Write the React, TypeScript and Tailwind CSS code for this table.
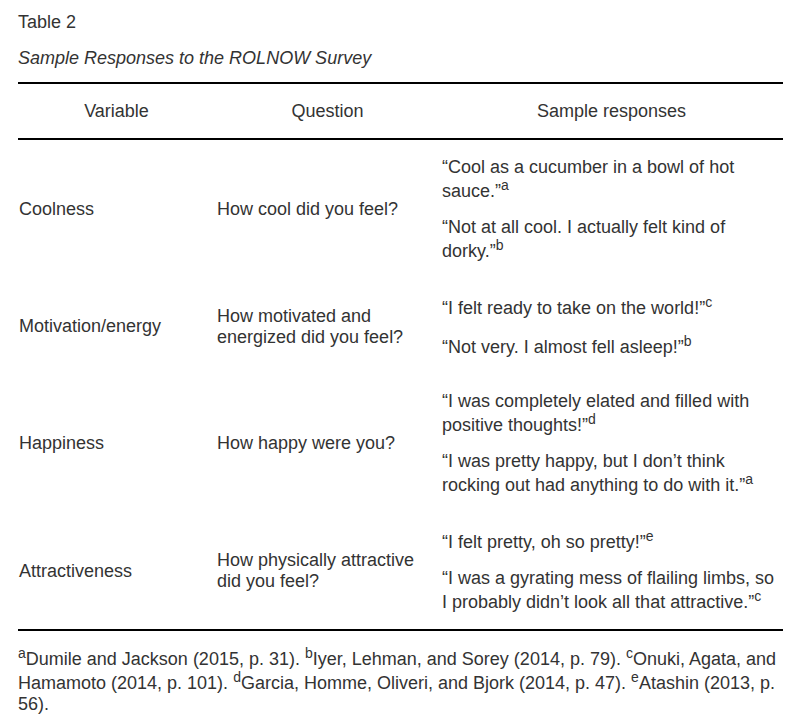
import React from 'react';

type Resp = { text: string; note: string };
type Row = { variable: string; question: string; responses: Resp[] };

const rows: Row[] = [
  {
    variable: 'Coolness',
    question: 'How cool did you feel?',
    responses: [
      { text: '“Cool as a cucumber in a bowl of hot sauce.”', note: 'a' },
      { text: '“Not at all cool. I actually felt kind of dorky.”', note: 'b' },
    ],
  },
  {
    variable: 'Motivation/energy',
    question: 'How motivated and energized did you feel?',
    responses: [
      { text: '“I felt ready to take on the world!”', note: 'c' },
      { text: '“Not very. I almost fell asleep!”', note: 'b' },
    ],
  },
  {
    variable: 'Happiness',
    question: 'How happy were you?',
    responses: [
      { text: '“I was completely elated and filled with positive thoughts!”', note: 'd' },
      { text: '“I was pretty happy, but I don’t think rocking out had anything to do with it.”', note: 'a' },
    ],
  },
  {
    variable: 'Attractiveness',
    question: 'How physically attractive did you feel?',
    responses: [
      { text: '“I felt pretty, oh so pretty!”', note: 'e' },
      { text: '“I was a gyrating mess of flailing limbs, so I probably didn’t look all that attractive.”', note: 'c' },
    ],
  },
];

const Sup: React.FC<{ children: React.ReactNode }> = ({ children }) => (
  <sup className="top-0 align-super text-[14px] leading-[14px]">{children}</sup>
);

const App: React.FC = () => {
  return (
    <div className="min-h-[725px] w-[809px] bg-white px-[18px] pt-[12px] font-['Liberation_Sans',Arial,sans-serif] text-[18px] leading-[normal] text-[#333333]">
      <div>Table 2</div>
      <div className="mt-[15px] italic">Sample Responses to the ROLNOW Survey</div>

      <table className="mt-[13px] w-[765px] table-fixed border-collapse">
        <colgroup>
          <col className="w-[197px]" />
          <col className="w-[225px]" />
          <col className="w-[343px]" />
        </colgroup>
        <thead>
          <tr className="border-y-2 border-black">
            <th className="pt-[17px] pb-[16px] text-center font-normal">Variable</th>
            <th className="pt-[17px] pb-[16px] text-center font-normal">Question</th>
            <th className="pt-[17px] pb-[16px] text-center font-normal">Sample responses</th>
          </tr>
        </thead>
        <tbody className="border-b-2 border-black">
          {rows.map((row) => (
            <tr key={row.variable}>
              <td className="pt-[17px] pb-[16px] pl-px pr-2 align-middle">{row.variable}</td>
              <td className="pt-[17px] pb-[16px] pl-[2px] pr-2 align-middle">{row.question}</td>
              <td className="pt-[17px] pb-[16px] pl-[2px] pr-0 align-middle">
                {row.responses.map((r, i) => (
                  <p key={i} className={i > 0 ? 'mt-[15px]' : ''}>
                    {r.text}
                    <Sup>{r.note}</Sup>
                  </p>
                ))}
              </td>
            </tr>
          ))}
        </tbody>
      </table>

      <p className="mt-[15px] pr-1">
        <Sup>a</Sup>Dumile and Jackson (2015, p. 31). <Sup>b</Sup>Iyer, Lehman, and Sorey (2014, p. 79).{' '}
        <Sup>c</Sup>Onuki, Agata, and Hamamoto (2014, p. 101). <Sup>d</Sup>Garcia, Homme, Oliveri, and Bjork (2014,
        p. 47). <Sup>e</Sup>Atashin (2013, p. 56).
      </p>
    </div>
  );
};

export default App;
